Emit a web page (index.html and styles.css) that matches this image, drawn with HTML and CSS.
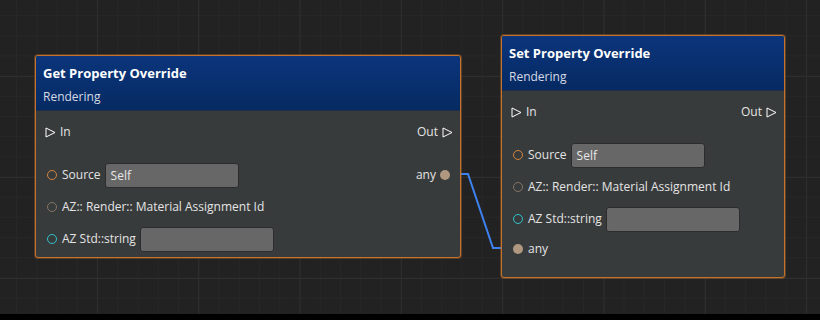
FILE: index.html
```html
<!DOCTYPE html>
<html lang="en">
<head>
    <meta charset="UTF-8">
    <meta name="viewport" content="width=device-width, initial-scale=1.0">
    <title>Script Canvas</title>
    <link rel="stylesheet" href="styles.css">
</head>
<body>
    <div class="canvas">
        <!-- connection: any -> any -->
        <svg class="wire" width="820" height="314" viewBox="0 0 820 314">
            <path d="M460 174 H468 L493 248 H502" fill="none" stroke="#3d82ef" stroke-width="2"/>
        </svg>

        <div class="node node-get">
            <div class="node-header">
                <div class="node-title">Get Property Override</div>
                <div class="node-sub">Rendering</div>
            </div>
            <div class="node-body">
                <div class="row exec">
                    <div class="pin">
                        <svg class="tri" width="11" height="11" viewBox="0 0 11 11"><path d="M1 1 L10 5.5 L1 10 Z" fill="none" stroke="#fff" stroke-width="1" stroke-linejoin="miter"/></svg>
                        <span class="label">In</span>
                    </div>
                    <div class="pin out">
                        <span class="label">Out</span>
                        <svg class="tri" width="11" height="11" viewBox="0 0 11 11"><path d="M1 1 L10 5.5 L1 10 Z" fill="none" stroke="#fff" stroke-width="1" stroke-linejoin="miter"/></svg>
                    </div>
                </div>
                <div class="row data first">
                    <div class="pin">
                        <span class="dot ring orange"></span>
                        <span class="label">Source</span>
                        <span class="field">Self</span>
                    </div>
                    <div class="pin out">
                        <span class="label">any</span>
                        <span class="dot fill tan"></span>
                    </div>
                </div>
                <div class="row data">
                    <div class="pin">
                        <span class="dot ring brown"></span>
                        <span class="label">AZ:: Render:: Material Assignment Id</span>
                    </div>
                </div>
                <div class="row data">
                    <div class="pin">
                        <span class="dot ring cyan"></span>
                        <span class="label">AZ Std::string</span>
                        <span class="field"></span>
                    </div>
                </div>
            </div>
        </div>

        <div class="node node-set">
            <div class="node-header">
                <div class="node-title">Set Property Override</div>
                <div class="node-sub">Rendering</div>
            </div>
            <div class="node-body">
                <div class="row exec">
                    <div class="pin">
                        <svg class="tri" width="11" height="11" viewBox="0 0 11 11"><path d="M1 1 L10 5.5 L1 10 Z" fill="none" stroke="#fff" stroke-width="1" stroke-linejoin="miter"/></svg>
                        <span class="label">In</span>
                    </div>
                    <div class="pin out">
                        <span class="label">Out</span>
                        <svg class="tri" width="11" height="11" viewBox="0 0 11 11"><path d="M1 1 L10 5.5 L1 10 Z" fill="none" stroke="#fff" stroke-width="1" stroke-linejoin="miter"/></svg>
                    </div>
                </div>
                <div class="row data first">
                    <div class="pin">
                        <span class="dot ring orange"></span>
                        <span class="label">Source</span>
                        <span class="field">Self</span>
                    </div>
                </div>
                <div class="row data">
                    <div class="pin">
                        <span class="dot ring brown"></span>
                        <span class="label">AZ:: Render:: Material Assignment Id</span>
                    </div>
                </div>
                <div class="row data">
                    <div class="pin">
                        <span class="dot ring cyan"></span>
                        <span class="label">AZ Std::string</span>
                        <span class="field"></span>
                    </div>
                </div>
                <div class="row data last">
                    <div class="pin">
                        <span class="dot fill tan"></span>
                        <span class="label">any</span>
                    </div>
                </div>
            </div>
        </div>
    </div>
</body>
</html>
```

FILE: styles.css
```css
body {
    margin: 0;
    padding: 0;
    background-color: #000;
    font-family: "Open Sans", "Noto Sans", sans-serif;
    font-size: 12px;
    color: #e4e4e4;
}
.canvas {
    position: relative;
    width: 820px;
    height: 314px;
    overflow: hidden;
    background-color: #222;
    background-image:
        linear-gradient(to right, #2e2e2e 1px, transparent 1px),
        linear-gradient(to bottom, #2e2e2e 1px, transparent 1px),
        linear-gradient(to right, #272727 1px, transparent 1px),
        linear-gradient(to bottom, #272727 1px, transparent 1px);
    background-size:
        101.3px 100%,
        100% 101px,
        20.26px 100%,
        100% 20.2px;
    background-position:
        97px 0,
        0 177px,
        16px 0,
        0 15px;
}
.wire {
    position: absolute;
    left: 0;
    top: 0;
}
.node {
    position: absolute;
    box-sizing: border-box;
    display: flex;
    flex-direction: column;
    background-color: #383b3c;
    border: 1px solid #c4732c;
    border-radius: 3px;
    box-shadow: 0 0 0 1px rgba(196, 115, 44, 0.35);
    overflow: hidden;
}
.node-get {
    left: 35px;
    top: 55px;
    width: 426px;
    height: 203px;
}
.node-set {
    left: 501px;
    top: 35px;
    width: 284px;
    height: 243px;
}
.node-header {
    height: 55px;
    box-sizing: border-box;
    padding: 9px 8px 6px 7px;
    background: linear-gradient(to bottom, #0b357c, #062a62);
    border-bottom: 1px solid #1f2e44;
}
.node-title {
    font-weight: bold;
    font-size: 13px;
    line-height: 16px;
    color: #fff;
}
.node-sub {
    margin-top: 8px;
    line-height: 16px;
    color: #d6dbe3;
}
.node-body {
    padding: 11px 7px 0 9px;
}
.row {
    display: flex;
    justify-content: space-between;
    align-items: center;
}
.exec {
    height: 20px;
}
.data {
    height: 26px;
    margin-top: 6px;
}
.data.first {
    margin-top: 20px;
}
.node-set .data.first {
    margin-top: 20px;
}
.node-set .data.last {
    margin-top: 4px;
}
.pin {
    display: flex;
    align-items: center;
    gap: 5px;
}
.pin.out {
    gap: 4px;
}
.row.data .pin:first-child {
    padding-left: 2px;
}
.row.data .pin.out {
    padding-right: 3px;
}
.exec .pin:first-child {
    gap: 4px;
    padding-left: 0;
}
.label {
    line-height: 16px;
    white-space: nowrap;
}
.tri {
    display: block;
}
.dot {
    display: block;
    box-sizing: border-box;
    width: 10px;
    height: 10px;
    border-radius: 50%;
}
.ring {
    border: 1.5px solid;
}
.ring.orange {
    border-color: #d4843e;
}
.ring.brown {
    border-color: #857467;
}
.ring.cyan {
    border-color: #2fc4cc;
}
.fill.tan {
    background-color: #b0977f;
}
.field {
    box-sizing: border-box;
    width: 134px;
    height: 25px;
    padding: 0 5px;
    margin-left: -1px;
    line-height: 23px;
    background-color: #676767;
    border: 1px solid #2c2c2c;
    border-radius: 3px;
    color: #e8e8e8;
}
```
